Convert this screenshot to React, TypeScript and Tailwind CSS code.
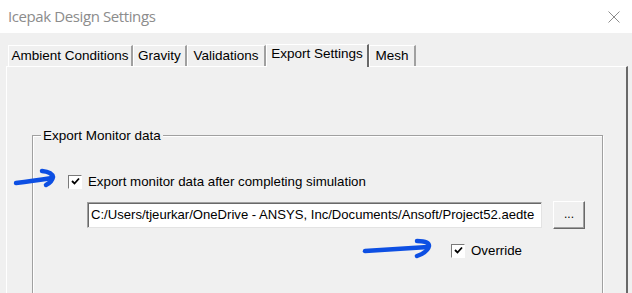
import React from "react";

const tabs = [
  { label: "Ambient Conditions", w: 125 },
  { label: "Gravity", w: 54 },
  { label: "Validations", w: 79 },
  { label: "Export Settings", w: 103 },
  { label: "Mesh", w: 47 },
];

const Check = () => (
  <span className="flex h-[14px] w-[14px] items-center justify-center border border-t-[#7a7a7a] border-l-[#7a7a7a] border-r-white border-b-white bg-white">
    <svg width="9" height="9" viewBox="0 0 9 9">
      <path d="M1 4 L3.5 6.5 L8 1.5" fill="none" stroke="#000" strokeWidth="1.8" />
    </svg>
  </span>
);

const Tab = ({ label, w, active }: { label: string; w: number; active: boolean }) => (
  <div
    style={{ width: w }}
    className={
      active
        ? "relative z-10 -mb-px flex h-[23px] items-center justify-center border-l border-t border-r-2 border-l-white border-t-white border-r-[#696969] bg-[#f0f0f0] pb-[3px] text-[13.5px]"
        : "flex h-[21px] items-center justify-center border-l border-t border-r-2 border-l-white border-t-white border-r-[#a0a0a0] bg-[#f0f0f0] text-[13.5px]"
    }
  >
    {label}
  </div>
);

const Arrow = ({ className, width, d, head }: { className: string; width: number; d: string; head: string }) => (
  <svg className={className} width={width} height="24" viewBox={`0 0 ${width} 24`}>
    <path d={d} fill="none" stroke="#0d4fe3" strokeWidth="4.5" strokeLinecap="round" strokeLinejoin="round" />
    <path d={head} fill="none" stroke="#0d4fe3" strokeWidth="4.5" strokeLinecap="round" strokeLinejoin="round" />
  </svg>
);

export default function App() {
  return (
    <div className="relative h-[293px] w-[632px] overflow-hidden bg-[#f0f0f0] font-['Liberation_Sans',Arial,sans-serif] text-[13px] text-black">
      {/* title bar */}
      <div className="flex h-[33px] items-center justify-between bg-white pl-[8px] pr-[12px]">
        <span className="text-[15px] text-[#8c8c8c] font-['Open_Sans',sans-serif] tracking-[-0.4px]">Icepak Design Settings</span>
        <svg width="12" height="12" viewBox="0 0 12 12">
          <path d="M0.5 0.5 L11.5 11.5 M11.5 0.5 L0.5 11.5" stroke="#8c8c8c" strokeWidth="1" />
        </svg>
      </div>

      {/* tabs */}
      <div className="flex flex-col pl-[6px] pr-[4px] pt-[11px]">
        <div className="flex items-end pl-[2px]">
          {tabs.map((t) => (
            <Tab key={t.label} label={t.label} w={t.w} active={t.label === "Export Settings"} />
          ))}
        </div>

        <div className="h-[240px] border-l border-t border-r-2 border-l-white border-t-white border-r-[#696969] pl-[25px] pr-[23px] pt-[68px]">
          {/* group box */}
          <div className="relative h-[200px] border border-[#a0a0a0] shadow-[inset_1px_1px_0_#fff,1px_1px_0_#fff]">
            <span className="absolute -top-[10px] left-[8px] bg-[#f0f0f0] px-[2px] text-[13.5px]">Export Monitor data</span>

            <div className="flex flex-col pl-[35px] pt-[36px]">
              <label className="flex items-center gap-[6px] text-[13.3px]">
                <Check />
                <span>Export monitor data after completing simulation</span>
              </label>

              <div className="mt-[9px] flex items-center gap-[11px] pl-[19px]">
                <div className="flex h-[26px] w-[455px] items-center overflow-hidden whitespace-nowrap border border-t-[#a0a0a0] border-l-[#a0a0a0] border-r-[#e3e3e3] border-b-[#e3e3e3] bg-white px-[3px] text-[13.1px] shadow-[inset_1px_1px_0_#696969]">
                  C:/Users/tjeurkar/OneDrive - ANSYS, Inc/Documents/Ansoft/Project52.aedte
                </div>
                <button className="flex h-[28px] w-[32px] items-center justify-center border border-t-white border-l-white border-r-[#696969] border-b-[#696969] bg-[#f0f0f0] pb-[2px] text-[12px] shadow-[inset_-1px_-1px_0_#a0a0a0]">
                  ...
                </button>
              </div>

              <label className="mt-[12px] flex items-center gap-[6px] pl-[383px] text-[13.3px]">
                <Check />
                <span>Override</span>
              </label>
            </div>
          </div>
        </div>
      </div>

      {/* hand-drawn annotations */}
      <Arrow
        className="absolute left-[12px] top-[166px]"
        width={48}
        d="M4 17 Q20 15 40 12"
        head="M30 5 Q40 6 41 11 Q40 16 34 19"
      />
      <Arrow
        className="absolute left-[360px] top-[236px]"
        width={76}
        d="M5 15 Q35 13 68 11"
        head="M57 5 Q69 5 69 10 Q68 16 57 20"
      />
    </div>
  );
}
